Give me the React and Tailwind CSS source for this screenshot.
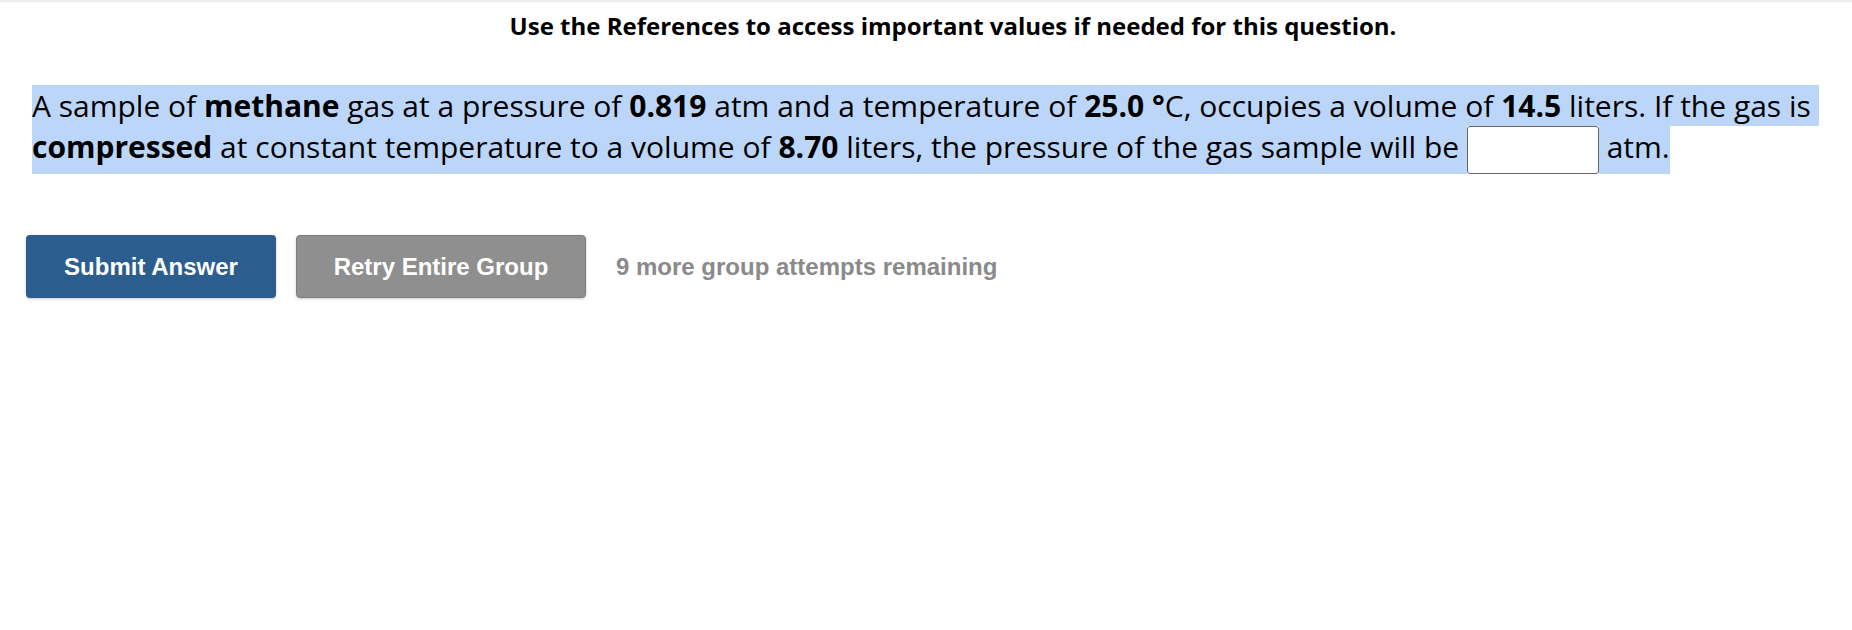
import { useEffect, useRef } from "react";

export default function App() {
  const qRef = useRef(null);

  // the reference shows the question text selected
  useEffect(() => {
    const el = qRef.current;
    if (!el) return;
    const sel = window.getSelection();
    const range = document.createRange();
    range.selectNodeContents(el);
    sel.removeAllRanges();
    sel.addRange(range);
  }, []);

  return (
    <div className="min-h-screen bg-white border-t-2 border-[#efefef]" style={{ fontFamily: "'Open Sans', sans-serif" }}>
      {/* References note */}
      <div className="pt-[8px] pl-[54px] text-center">
        <p className="text-[24px] font-bold text-black leading-[32px]">
          Use the References to access important values if needed for this question.
        </p>
      </div>

      {/* Question */}
      <div className="mt-[43px] px-[32px]">
        <p
          ref={qRef}
          className="text-[30px] leading-[41px] text-black selection:bg-[#bcd6fa]"
        >
          A sample of <b>methane</b> gas at a pressure of <b>0.819</b> atm and a temperature of <b>25.0 °</b>C, occupies a volume of <b>14.5</b> liters. If the gas is <b>compressed</b> at constant temperature to a volume of <b>8.70</b> liters, the pressure of the gas sample will be{" "}
          <input
            type="text"
            className="inline-block align-middle w-[132px] h-[48px] border border-[#666] rounded-[3px] bg-white"
          />{" "}
          atm.
        </p>
      </div>

      {/* Actions */}
      <div className="mt-[61px] pl-[26px] flex items-center" style={{ fontFamily: "'Liberation Sans', Arial, sans-serif" }}>
        <button className="w-[250px] h-[63px] rounded-[4px] bg-[#2b5e8f] text-white text-[24px] font-bold shadow-[0_1px_3px_rgba(0,0,0,0.2)]">
          Submit Answer
        </button>
        <button className="ml-[20px] w-[290px] h-[63px] rounded-[4px] bg-[#8f8f8f] border border-[#7d7d7d] text-white text-[24px] font-bold shadow-[0_1px_3px_rgba(0,0,0,0.2)]">
          Retry Entire Group
        </button>
        <span className="ml-[30px] text-[24px] font-bold text-[#8a8a8a]">
          9 more group attempts remaining
        </span>
      </div>
    </div>
  );
}
